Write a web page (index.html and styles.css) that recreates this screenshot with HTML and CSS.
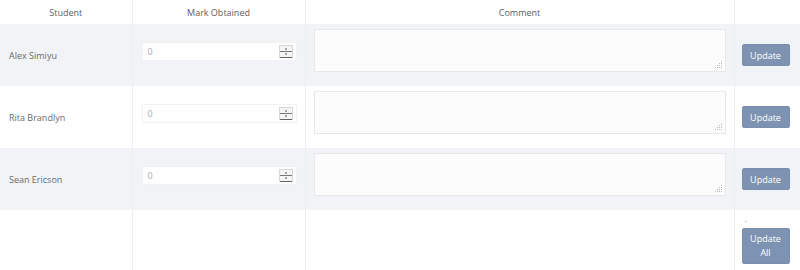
FILE: index.html
```html
<!DOCTYPE html>
<html>
<head>
<meta charset="utf-8">
<link rel="stylesheet" href="styles.css">
</head>
<body>
<table class="marks">
  <colgroup>
    <col class="c-student"><col class="c-mark"><col class="c-comment"><col class="c-action">
  </colgroup>
  <thead>
    <tr><th>Student</th><th>Mark Obtained</th><th>Comment</th><th></th></tr>
  </thead>
  <tbody>
    <tr class="alt">
      <td class="name">Alex Simiyu</td>
      <td class="mark"><div class="num"><span>0</span><svg class="spin" width="14" height="13" viewBox="0 0 14 13"><rect x="0.5" y="0.5" width="13" height="12" fill="#f4f4f4" stroke="#d8d8d8"/><line x1="1" y1="6.5" x2="13" y2="6.5" stroke="#777"/><line x1="1" y1="12.5" x2="13" y2="12.5" stroke="#666"/><path d="M6 3.5h2v1H6z M6 8.5h2v1H6z" fill="#555"/></svg></div></td>
      <td class="comment"><div class="ta"><svg class="grip" width="8" height="8" viewBox="0 0 8 8"><path d="M6 0h1v1H6zM4 2h1v1H4zM6 2h1v1H6zM2 4h1v1H2zM4 4h1v1H4zM6 4h1v1H6zM0 6h1v1H0zM2 6h1v1H2zM4 6h1v1H4zM6 6h1v1H6z" fill="#bbb"/></svg></div></td>
      <td class="act"><button class="btn">Update</button></td>
    </tr>
    <tr>
      <td class="name">Rita Brandlyn</td>
      <td class="mark"><div class="num"><span>0</span><svg class="spin" width="14" height="13" viewBox="0 0 14 13"><rect x="0.5" y="0.5" width="13" height="12" fill="#f4f4f4" stroke="#d8d8d8"/><line x1="1" y1="6.5" x2="13" y2="6.5" stroke="#777"/><line x1="1" y1="12.5" x2="13" y2="12.5" stroke="#666"/><path d="M6 3.5h2v1H6z M6 8.5h2v1H6z" fill="#555"/></svg></div></td>
      <td class="comment"><div class="ta"><svg class="grip" width="8" height="8" viewBox="0 0 8 8"><path d="M6 0h1v1H6zM4 2h1v1H4zM6 2h1v1H6zM2 4h1v1H2zM4 4h1v1H4zM6 4h1v1H6zM0 6h1v1H0zM2 6h1v1H2zM4 6h1v1H4zM6 6h1v1H6z" fill="#bbb"/></svg></div></td>
      <td class="act"><button class="btn">Update</button></td>
    </tr>
    <tr class="alt">
      <td class="name">Sean Ericson</td>
      <td class="mark"><div class="num"><span>0</span><svg class="spin" width="14" height="13" viewBox="0 0 14 13"><rect x="0.5" y="0.5" width="13" height="12" fill="#f4f4f4" stroke="#d8d8d8"/><line x1="1" y1="6.5" x2="13" y2="6.5" stroke="#777"/><line x1="1" y1="12.5" x2="13" y2="12.5" stroke="#666"/><path d="M6 3.5h2v1H6z M6 8.5h2v1H6z" fill="#555"/></svg></div></td>
      <td class="comment"><div class="ta"><svg class="grip" width="8" height="8" viewBox="0 0 8 8"><path d="M6 0h1v1H6zM4 2h1v1H4zM6 2h1v1H6zM2 4h1v1H2zM4 4h1v1H4zM6 4h1v1H6zM0 6h1v1H0zM2 6h1v1H2zM4 6h1v1H4zM6 6h1v1H6z" fill="#bbb"/></svg></div></td>
      <td class="act"><button class="btn">Update</button></td>
    </tr>
    <tr class="last">
      <td></td>
      <td></td>
      <td></td>
      <td class="act top"><div class="dot">.</div><button class="btn tall">Update<br>All</button></td>
    </tr>
  </tbody>
</table>
</body>
</html>
```
FILE: styles.css
```css
html, body {
  margin: 0;
  padding: 0;
  background: #fff;
}
body {
  font-family: "Open Sans", "DejaVu Sans", sans-serif;
  color: #6a6a6a;
  font-size: 9px;
}
.marks {
  width: 800px;
  border-collapse: collapse;
  table-layout: fixed;
}
.c-student { width: 132px; }
.c-mark { width: 173px; }
.c-comment { width: 429px; }
.c-action { width: 66px; }
th, td {
  border-left: 1px solid #eceef1;
  padding: 0;
}
th:first-child, td:first-child { border-left: none; }
th {
  height: 24px;
  font-weight: normal;
  color: #5e5e5e;
  font-size: 9px;
  text-align: center;
  vertical-align: middle;
}
tbody tr { height: 62px; }
tbody tr.alt { background: #f2f3f7; }
td { vertical-align: middle; }
td.name { padding-left: 9px; }
td.mark { padding-bottom: 8px; }
td.comment { vertical-align: top; padding-top: 5px; }
.num {
  margin: 0 8px 0 9px;
  height: 19px;
  background: #fefefe;
  border: 1px solid #f2f2f2;
  box-sizing: border-box;
  display: flex;
  align-items: center;
  justify-content: space-between;
  padding: 0 3px 0 5px;
  color: #aaa;
}
.spin { display: block; }
.ta {
  margin: 0 8px 0 8px;
  height: 43px;
  background: #fcfcfc;
  border: 1px solid #e6e8ea;
  box-sizing: border-box;
  display: flex;
  justify-content: flex-end;
  align-items: flex-end;
  padding: 0 2px 2px 0;
}
.grip { display: block; }
.act { padding-left: 7px; }
.act.top { vertical-align: top; padding-top: 3px; }
.dot {
  font-size: 9px;
  line-height: 12px;
  height: 15px;
  color: #888;
  padding-left: 3px;
}
.btn {
  width: 48px;
  height: 22px;
  background: #7e93b1;
  border: 1px solid #7a8fae;
  border-radius: 2px;
  color: #fff;
  font-family: "Open Sans", "DejaVu Sans", sans-serif;
  font-size: 9px;
  padding: 0;
  display: block;
}
.btn.tall {
  height: 36px;
  line-height: 14px;
}
```
